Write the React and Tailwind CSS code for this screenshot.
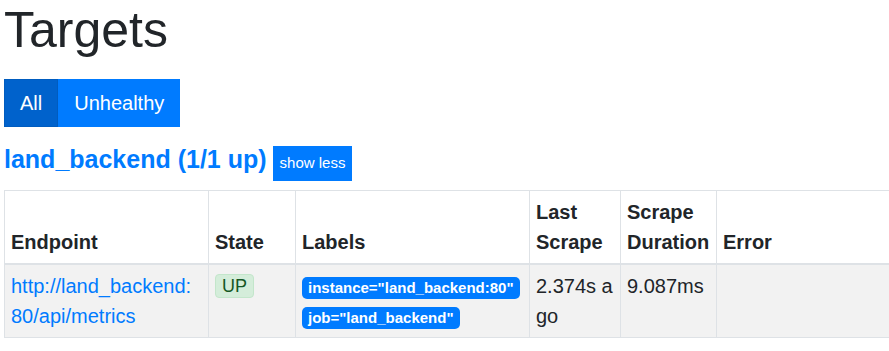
import React from "react"

const labels = ['instance="land_backend:80"', 'job="land_backend"']

const App = () => {
  return (
    <div className="w-[889px] h-[351px] overflow-hidden bg-white px-[4px] font-['Liberation_Sans',Arial,sans-serif] text-[20px] leading-[30px] text-[#212529]">
      <h1 className="text-[50px] leading-[60px] font-normal">Targets</h1>

      {/* filter buttons */}
      <div className="mt-[19px] flex">
        <button type="button" className="px-[15px] py-[8px] leading-[30px] border border-[#005cbf] bg-[#0062cc] text-white">
          All
        </button>
        <button type="button" className="px-[15px] py-[8px] leading-[30px] border border-[#007bff] bg-[#007bff] text-white">
          Unhealthy
        </button>
      </div>

      {/* job header */}
      <div className="mt-[17px] flex items-baseline">
        <h5 className="text-[25px] leading-[30px] font-bold text-[#007bff]">land_backend (1/1 up)</h5>
        <button type="button" className="ml-[6px] px-[6px] py-[5px] text-[15px] leading-[22.5px] border border-[#007bff] bg-[#007bff] text-white">
          show less
        </button>
      </div>

      <table className="mt-[9px] w-[1012px] table-fixed border-collapse border border-[#dee2e6]">
        <thead>
          <tr>
            <th className="w-[204px] border border-b-2 border-[#dee2e6] p-[6px] text-left align-bottom font-bold">Endpoint</th>
            <th className="w-[87px] border border-b-2 border-[#dee2e6] p-[6px] text-left align-bottom font-bold">State</th>
            <th className="w-[234px] border border-b-2 border-[#dee2e6] p-[6px] text-left align-bottom font-bold">Labels</th>
            <th className="w-[91px] border border-b-2 border-[#dee2e6] p-[6px] text-left align-bottom font-bold">Last Scrape</th>
            <th className="w-[96px] border border-b-2 border-[#dee2e6] p-[6px] text-left align-bottom font-bold">Scrape Duration</th>
            <th className="border border-b-2 border-[#dee2e6] p-[6px] text-left align-bottom font-bold">Error</th>
          </tr>
        </thead>
        <tbody>
          <tr className="bg-[#f2f2f2]">
            <td className="border border-[#dee2e6] p-[6px] align-top break-all">
              <a href="#" className="text-[#007bff]">http://land_backend:80/api/metrics</a>
            </td>
            <td className="border border-[#dee2e6] p-[6px] align-top">
              <span className="mt-[3px] inline-block align-top px-[6px] py-[2px] text-[18px] leading-[18px] rounded-[4px] border border-[#c3e6cb] bg-[#d4edda] text-[#155724]">
                UP
              </span>
            </td>
            <td className="border border-[#dee2e6] p-[6px] align-top">
              <div className="flex flex-col items-start">
                {labels.map((l, i) => (
                  <span
                    key={l}
                    className={`${i === 0 ? 'mt-[6px]' : 'mt-[8px]'} px-[6px] py-[3.5px] text-[15px] leading-[15px] font-bold rounded-[5px] bg-[#007bff] text-white`}
                  >
                    {l}
                  </span>
                ))}
              </div>
            </td>
            <td className="border border-[#dee2e6] p-[6px] align-top break-all">2.374s ago</td>
            <td className="border border-[#dee2e6] p-[6px] align-top">9.087ms</td>
            <td className="border border-[#dee2e6] p-[6px] align-top"></td>
          </tr>
        </tbody>
      </table>
    </div>
  )
}

export default App
